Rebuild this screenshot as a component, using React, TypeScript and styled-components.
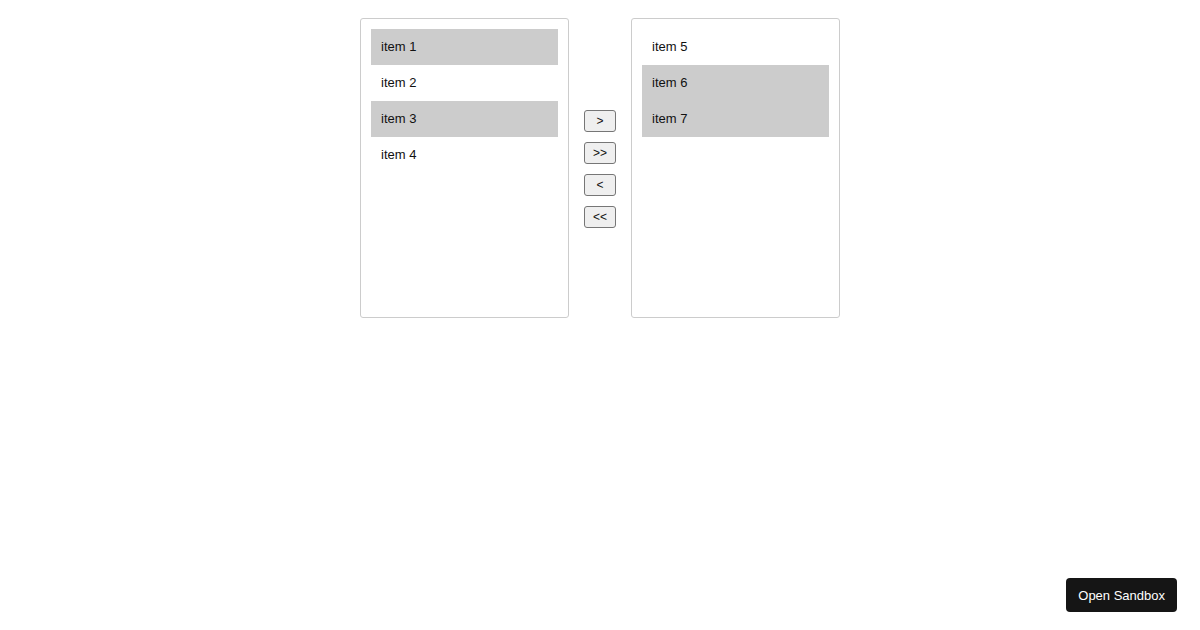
import { useState } from "react";
import styled, { createGlobalStyle } from "styled-components";

const GlobalStyle = createGlobalStyle`
    body {
        margin: 8px;
        font-family: "Liberation Sans", Arial, sans-serif;
        color: #111;
        background: #fff;
    }
`;

const Wrapper = styled.div`
    display: flex;
    justify-content: center;
    padding-top: 10px;
`;

const TransferBox = styled.div`
    display: flex;
    align-items: center;
    width: 480px;
`;

const ListPanel = styled.ul`
    flex: 1;
    height: 300px;
    box-sizing: border-box;
    margin: 0;
    padding: 10px;
    list-style: none;
    border: 1px solid #ccc;
    border-radius: 3px;
`;

const ListItem = styled.li<{ $selected: boolean }>`
    padding: 10px;
    font-size: 13px;
    line-height: 16px;
    cursor: pointer;
    background-color: ${(p) => (p.$selected ? "#cccccc" : "transparent")};
`;

const ButtonColumn = styled.div`
    display: flex;
    flex-direction: column;
    gap: 10px;
    margin: 2px 15px 0;
`;

const MoveButton = styled.button`
    width: 32px;
    height: 22px;
    padding: 0;
    font-family: "Liberation Sans", Arial, sans-serif;
    font-size: 12px;
    color: #111;
    background: #efefef;
    border: 1px solid #767676;
    border-radius: 3px;
    cursor: pointer;
`;

const SandboxButton = styled.button`
    position: fixed;
    right: 23px;
    bottom: 18px;
    height: 34px;
    padding: 0 12px;
    font-family: "Liberation Sans", Arial, sans-serif;
    font-size: 13px;
    color: #fff;
    background: #151515;
    border: none;
    border-radius: 4px;
`;

function App() {
    const [left, setLeft] = useState(["item 1", "item 2", "item 3", "item 4"]);
    const [right, setRight] = useState(["item 5", "item 6", "item 7"]);
    const [selected, setSelected] = useState<string[]>(["item 1", "item 3", "item 6", "item 7"]);

    const toggle = (item: string) => {
        setSelected((prev) => (prev.includes(item) ? prev.filter((i) => i !== item) : [...prev, item]));
    };

    const moveRight = () => {
        const moving = left.filter((i) => selected.includes(i));
        setLeft(left.filter((i) => !selected.includes(i)));
        setRight([...right, ...moving]);
    };
    const moveAllRight = () => {
        setRight([...right, ...left]);
        setLeft([]);
    };
    const moveLeft = () => {
        const moving = right.filter((i) => selected.includes(i));
        setRight(right.filter((i) => !selected.includes(i)));
        setLeft([...left, ...moving]);
    };
    const moveAllLeft = () => {
        setLeft([...left, ...right]);
        setRight([]);
    };

    return (
        <Wrapper>
            <GlobalStyle />
            <TransferBox>
                <ListPanel>
                    {left.map((item) => (
                        <ListItem key={item} $selected={selected.includes(item)} onClick={() => toggle(item)}>
                            {item}
                        </ListItem>
                    ))}
                </ListPanel>
                <ButtonColumn>
                    <MoveButton onClick={moveRight}>&gt;</MoveButton>
                    <MoveButton onClick={moveAllRight}>&gt;&gt;</MoveButton>
                    <MoveButton onClick={moveLeft}>&lt;</MoveButton>
                    <MoveButton onClick={moveAllLeft}>&lt;&lt;</MoveButton>
                </ButtonColumn>
                <ListPanel>
                    {right.map((item) => (
                        <ListItem key={item} $selected={selected.includes(item)} onClick={() => toggle(item)}>
                            {item}
                        </ListItem>
                    ))}
                </ListPanel>
            </TransferBox>
            <SandboxButton>Open Sandbox</SandboxButton>
        </Wrapper>
    );
}

export default App;
